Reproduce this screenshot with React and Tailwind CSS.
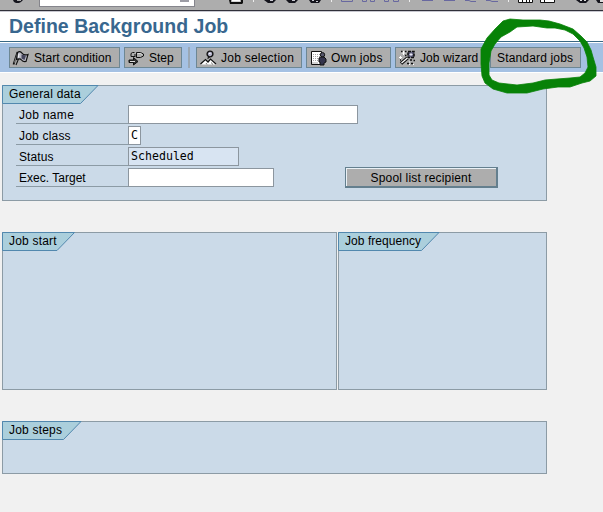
import React from "react";

const FlagIcon = () => (
  <svg width="17" height="16" viewBox="0 0 17 16" fill="none" className="shrink-0">
    <path d="M5.500 2L1.500 14.500" stroke="#111" strokeWidth="1.800" />
    <path d="M6.500 9L4 15" stroke="#111" strokeWidth="1.100" />
    <path d="M5.500 3L2.500 12.500" stroke="#ddd" strokeWidth=".6" />
    <path d="M5.500 2.500Q8 .500 10 3.200T16 4.500L14 11.500Q11 12 9.500 10T4.500 9.500Z" fill="#b9b9c4" stroke="#111" strokeWidth="1.200" />
    <path d="M9.500 4.500L14 5.500L12.500 10L9.500 8.500Z" fill="#44445c" />
    <path d="M7 4L6.500 7.500" stroke="#fff" />
  </svg>
);

const StepIcon = () => (
  <svg width="17" height="16" viewBox="0 0 17 16" fill="none" className="shrink-0">
    <path d="M8.500 2.500h4l3 1.500v2l-3 1.500h-4zM6.500 2.500h-2l-1.500 1v3h4.500M6 5h2" stroke="#111" />
    <path d="M9.500 3.500h3l1.500 1" stroke="#ddd" />
    <path d="M1 10h4.500v-2.500l4.500 4-4.500 3.500v-2.500H1z" fill="#333" stroke="#111" />
    <path d="M2 11.500h5" stroke="#ddd" />
  </svg>
);

const SelectionIcon = () => (
  <svg width="17" height="16" viewBox="0 0 17 16" fill="none" className="shrink-0">
    <path d="M1 14.500L5.500 9.500L8 12L10.500 9L16 14.500Z" fill="#fff" />
    <path d="M.5 14L5.500 9.500L8 12L10.500 9L16 14" stroke="#111" strokeWidth="1.200" />
    <path d="M6 13l1 1.500M11.500 12.500l1 2" stroke="#777" />
    <path d="M9.500 7L7.500 8.500" stroke="#111" strokeWidth="1.200" />
    <circle cx="10" cy="4" r="2.900" fill="#b4b4cc" stroke="#111" strokeWidth="1.400" />
    <path d="M9 3.500h1.500" stroke="#fff" />
  </svg>
);

const OwnJobsIcon = () => (
  <svg width="17" height="16" viewBox="0 0 17 16" fill="none" className="shrink-0">
    <path d="M1.500 1.500h10v13h-10z" fill="#fff" stroke="#111" />
    <path d="M3 4.500h7M3 6.500h7M3 8.500h6M3 10.500h6" stroke="#a5a5a5" strokeDasharray="1 1" />
    <path d="M2 12h6v2H2z" fill="#d2d2d2" />
    <circle cx="12.500" cy="4.800" r="2.200" fill="#55556a" stroke="#111" />
    <path d="M9 8l2-1h3l2 2v3l-2 1v2h-4v-3H9z" fill="#34344c" stroke="#111" />
  </svg>
);

const WizardIcon = () => (
  <svg width="17" height="16" viewBox="0 0 17 16" fill="none" className="shrink-0">
    <path d="M9 1.500h6v6H9z" fill="#60607e" stroke="#111" strokeWidth="1.600" strokeDasharray="3 1" />
    <path d="M12 3v3M10.500 4.500h3" stroke="#e8e8f4" />
    <path d="M2 13.500L8.500 8" stroke="#111" strokeWidth="3.600" />
    <path d="M2.500 13L8.500 8" stroke="#fff" strokeWidth="1.200" />
    <path d="M4.500 1v4M2.500 3h4M1.500 6v3M0 7.500h3" stroke="#fff" />
    <path d="M2 1.500h1.500M6 1.500h1.500M6 5.500h1.500M1 10h1M11 10h2M8 13.500h2M12 13.500h2M14.500 10.500h1.500" stroke="#111" strokeWidth="1.500" />
    <path d="M10 12h1M14 14.500h1M10 14.500h1" stroke="#fff" />
  </svg>
);

// bottom edges of the system toolbar icons, which are cut off by the window
const SystemIcons = () => (
  <svg width="603" height="10" viewBox="0 0 603 10" fill="none" className="absolute left-0 top-0">
    <path d="M13 0h10l-2 2-2 1h-3l-2-1z" fill="#16161e" />
    <path d="M17 0h4v1h-4z" fill="#aaa" />
    <path d="M229 0h2v2h10V0h2v3l-1 1h-12z" fill="#111" />
    <path d="M232 0h8v1.500h-8z" fill="#fff" />
    <path d="M264 0h12l-3 3h-5zM286 0h12l-3 3h-6zM309 0h12l-2 3h-8z" fill="#14141c" />
    <path d="M270 0h3v1h-3zM292 0h3v1h-3zM312 0h2v1h-2zM316 1h2v1h-2z" fill="#c9c9d2" />
    <path d="M253.500 0v2M331.500 0v2M409.500 0v2M508.500 0v2" stroke="#eee" />
    <path d="M341.500 0v1.500h11V0M362.500 0v1.500h4V0M370.500 0v1.500h4V0M384.500 0v1.500h4V0M393.500 0v1.500h5V0M422 .5h11M444 .5h11M465 .5h4l2 1h5M486 .5h4l2 1h6" stroke="#6868a0" />
    <path d="M518.500 0v2.500h14V0M540.500 0v2.500h14V0" fill="#fff" stroke="#111" />
    <path d="M522.500 0v2M526.500 0v2M529.500 0v2M544.500 0v2" stroke="#111" />
    <path d="M576 0h13l-3 3h-6zM596 0h7v3h-5z" fill="#14141c" />
    <path d="M580 0h2v1h-2zM584 0h2v1h-2zM600 0h3v2h-3z" fill="#ddd" />
  </svg>
);

function ToolButton({ icon, label, className }) {
  return (
    <button
      className={`flex h-[21px] shrink-0 items-center whitespace-nowrap border border-[#6d8794] bg-[#adadad] text-[12px] leading-[19px] ${className}`}
    >
      {icon}
      <span className="pt-[2px]">{label}</span>
    </button>
  );
}

function Panel({ title, tab, titleClass = "tracking-[0.2px]", className, children }) {
  return (
    <section className={`border border-[#8c9ba5] bg-[#cbdae8] ${className}`}>
      <div className="relative -ml-px -mt-px h-[19px]">
        <svg width={tab + 19} height="19" className="absolute left-0 top-0">
          <path d={`M.5 .5H${tab + 17.5}L${tab} 18.500H.5Z`} fill="#abcfdc" stroke="#5288ae" />
        </svg>
        <h2 className={`relative pl-[7px] text-[12px] leading-[19px] ${titleClass}`}>{title}</h2>
      </div>
      {children}
    </section>
  );
}

const fields = [
  { label: "Job name", value: "", box: "w-[230px] bg-white", text: "tracking-[0.3px]" },
  { label: "Job class", value: "C", box: "w-[13px] bg-white", text: "tracking-[0.2px]" },
  { label: "Status", value: "Scheduled", box: "w-[111px] bg-[#d8e4f2]", text: "tracking-[0.1px]" },
  { label: "Exec. Target", value: "", box: "w-[146px] bg-white", text: "tracking-[0.02px]" },
];

export default function App() {
  return (
    <div className="relative h-[512px] w-[603px] overflow-hidden bg-[#f1f1f1] font-['Liberation_Sans',Arial,sans-serif] text-black">
      <header className="relative h-[11px] border-b border-[#30303a] bg-[#adadad]">
        <SystemIcons />
        <div className="ml-[39px] flex h-[7px] w-[156px] justify-end border-x border-b border-[#85858c] bg-white pr-[5px]">
          <div className="h-[2px] w-[9px] bg-[#9c9ca5]" />
        </div>
      </header>

      <div className="h-[31px] border-b border-[#386784] border-t border-t-[#c8c8d0] bg-white pl-[9px]">
        <h1 className="whitespace-nowrap text-[19.500px] font-bold leading-[29px] tracking-[0.02px] text-[#38678f]">
          Define Background Job
        </h1>
      </div>

      <nav className="flex h-[31px] items-start border-y border-t-white border-b-white bg-[#a5c1e3] pl-[9px] pt-[4px]">
        <ToolButton icon={<FlagIcon />} label="Start condition" className="w-[111px] gap-[5px] pl-[2px] tracking-[0.05px]" />
        <ToolButton icon={<StepIcon />} label="Step" className="ml-[4px] w-[58px] gap-[4px] pl-[3px]" />
        <div className="ml-[6px] h-[21px] w-[2px] bg-[#9aa8b6]" />
        <ToolButton icon={<SelectionIcon />} label="Job selection" className="ml-[6px] w-[106px] gap-[4px] pl-[3px] tracking-[0.24px]" />
        <ToolButton icon={<OwnJobsIcon />} label="Own jobs" className="ml-[4px] w-[85px] gap-[4px] pl-[3px] tracking-[0.2px]" />
        <ToolButton icon={<WizardIcon />} label="Job wizard" className="ml-[4px] w-[92px] gap-[4px] pl-[3px] tracking-[0.1px]" />
        <ToolButton label="Standard jobs" className="ml-[3px] w-[91px] pl-[6px] tracking-[0.16px]" />
      </nav>

      <main className="ml-[2px] mt-[12px] w-[545px]">
        <Panel title="General data" tab={78.5} className="h-[116px]">
          <div className="flex items-end pl-[13px] pt-px">
            <div className="flex flex-col gap-[2px]">
              {fields.map((f) => (
                <div key={f.label} className="flex h-[19px]">
                  <label className={`w-[112px] border-b border-[#8c9ba5] pl-[3px] text-[12px] leading-[20px] ${f.text}`}>
                    {f.label}
                  </label>
                  <div
                    className={`border border-[#8c969f] pl-[2px] font-['DejaVu_Sans_Mono',monospace] text-[11.600px] leading-[17px] ${f.box}`}
                  >
                    {f.value}
                  </div>
                </div>
              ))}
            </div>
            <button className="-mb-px -ml-[13px] h-[21px] w-[153px] border border-b-2 border-r-2 border-[#647f8e] bg-[#adadad] pt-px text-[12px] leading-[18px] tracking-[0.18px] shadow-[inset_1px_1px_0_#e9f0f5]">
              Spool list recipient
            </button>
          </div>
        </Panel>

        <div className="mt-[31px] flex gap-px">
          <Panel title="Job start" tab={55} className="h-[158px] w-[335px]" />
          <Panel title="Job frequency" tab={83.5} titleClass="tracking-[0.06px]" className="h-[158px] w-[209px]" />
        </div>

        <Panel title="Job steps" tab={61.5} className="mt-[31px] h-[53px]" />
      </main>

      {/* marker circle around "Standard jobs" */}
      <svg width="603" height="110" className="pointer-events-none absolute left-0 top-0">
        <path
          fillRule="evenodd"
          fill="#078207"
          stroke="#078207"
          strokeWidth="0.8"
          strokeLinejoin="round"
          d="M503 21L510 19L523 20L540 20L549 21L560 24L573 29L581 36L587 42L591 50L593 57L596 67L596 76L590 81L582 83L570 87L558 87L543 89L527 93L507 93L493 89L485 83L482 76L481 64L481 49L487 38L495 29Z
             M517 27L510 32L501 37L495 44L491 51L489 63L489 75L492 80L499 83L517 85L533 83L545 80L557 79L570 78L580 77L585 73L588 67L587 57L584 48L580 41L573 34L565 30L555 28L547 28L533 26Z"
        />
      </svg>
    </div>
  );
}
